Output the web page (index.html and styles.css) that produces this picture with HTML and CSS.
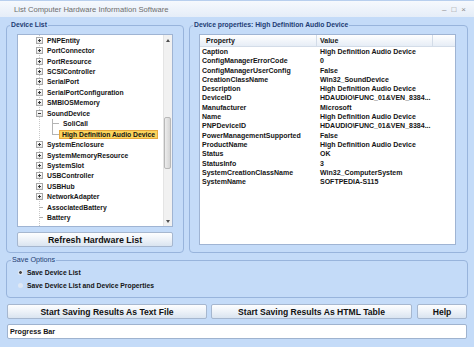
FILE: index.html
```html
<!DOCTYPE html>
<html>
<head>
    <title>List Computer Hardware Information Software</title>
    <meta charset="UTF-8">
    <meta name="viewport" content="width=device-width, initial-scale=1.0">
    <link rel="stylesheet" href="styles.css">
</head>
<body>
    <div class="window">
        <div class="titlebar">
            <span class="title">List Computer Hardware Information Software</span>
            <div class="controls"><span>&ndash;</span><span>&#9633;</span><span>&times;</span></div>
        </div>
        <div class="content">
            <div class="top">
                <fieldset class="group devices">
                    <legend>Device List</legend>
                    <div class="tree">
                        <ul class="nodes">
                            <li><span class="exp"></span>PNPEntity</li>
                            <li><span class="exp"></span>PortConnector</li>
                            <li><span class="exp"></span>PortResource</li>
                            <li><span class="exp"></span>SCSIController</li>
                            <li><span class="exp"></span>SerialPort</li>
                            <li><span class="exp"></span>SerialPortConfiguration</li>
                            <li><span class="exp"></span>SMBIOSMemory</li>
                            <li><span class="exp open"></span>SoundDevice</li>
                            <li class="child"><span class="conn"></span><span class="label">SoliCall</span></li>
                            <li class="child"><span class="conn last"></span><span class="label selected">High Definition Audio Device</span></li>
                            <li><span class="exp"></span>SystemEnclosure</li>
                            <li><span class="exp"></span>SystemMemoryResource</li>
                            <li><span class="exp"></span>SystemSlot</li>
                            <li><span class="exp"></span>USBController</li>
                            <li><span class="exp"></span>USBHub</li>
                            <li><span class="exp"></span>NetworkAdapter</li>
                            <li><span class="leaf"></span>AssociatedBattery</li>
                            <li><span class="leaf"></span>Battery</li>
                        </ul>
                        <div class="scroll">
                            <span class="arrow"></span>
                            <div class="track"><div class="thumb"></div></div>
                            <span class="arrow down"></span>
                        </div>
                    </div>
                    <button class="btn refresh">Refresh Hardware List</button>
                </fieldset>
                <fieldset class="group props">
                    <legend>Device properties: High Definition Audio Device</legend>
                    <div class="listview">
                        <div class="lv-head">
                            <span class="h-prop">Property</span>
                            <span class="h-val">Value</span>
                            <span class="h-rest"></span>
                        </div>
                        <table class="rows">
                            <tr><td class="k">Caption</td><td>High Definition Audio Device</td></tr>
                            <tr><td class="k">ConfigManagerErrorCode</td><td>0</td></tr>
                            <tr><td class="k">ConfigManagerUserConfig</td><td>False</td></tr>
                            <tr><td class="k">CreationClassName</td><td>Win32_SoundDevice</td></tr>
                            <tr><td class="k">Description</td><td>High Definition Audio Device</td></tr>
                            <tr><td class="k">DeviceID</td><td>HDAUDIO\FUNC_01&amp;VEN_8384...</td></tr>
                            <tr><td class="k">Manufacturer</td><td>Microsoft</td></tr>
                            <tr><td class="k">Name</td><td>High Definition Audio Device</td></tr>
                            <tr><td class="k">PNPDeviceID</td><td>HDAUDIO\FUNC_01&amp;VEN_8384...</td></tr>
                            <tr><td class="k">PowerManagementSupported</td><td>False</td></tr>
                            <tr><td class="k">ProductName</td><td>High Definition Audio Device</td></tr>
                            <tr><td class="k">Status</td><td>OK</td></tr>
                            <tr><td class="k">StatusInfo</td><td>3</td></tr>
                            <tr><td class="k">SystemCreationClassName</td><td>Win32_ComputerSystem</td></tr>
                            <tr><td class="k">SystemName</td><td>SOFTPEDIA-S115</td></tr>
                        </table>
                    </div>
                </fieldset>
            </div>
            <fieldset class="group save">
                <legend>Save Options</legend>
                <label class="radio"><span class="dot checked"></span>Save Device List</label>
                <label class="radio"><span class="dot"></span>Save Device List and Device Properties</label>
            </fieldset>
            <div class="actions">
                <button class="btn b-text">Start Saving Results As Text File</button>
                <button class="btn b-html">Start Saving Results As HTML Table</button>
                <button class="btn b-help">Help</button>
            </div>
            <div class="progress">Progress Bar</div>
        </div>
    </div>
</body>
</html>
```

FILE: styles.css
```css
* {
    box-sizing: border-box;
}
body {
    margin: 0;
    font-family: "Liberation Sans", Arial, sans-serif;
    background-color: #c4dbf8;
    color: #151515;
}
.window {
    width: 474px;
    height: 347px;
    overflow: hidden;
}
.titlebar {
    height: 17px;
    display: flex;
    align-items: center;
    justify-content: space-between;
    padding: 0 8px 0 14px;
    background: linear-gradient(#f6f9fd, #e5edf8);
    border-top: 1px solid #b8cfee;
}
.title {
    font-size: 7.6px;
    color: #6d6d6d;
}
.controls {
    display: flex;
    gap: 5px;
    font-size: 8px;
    color: #8c8c8c;
}
.content {
    padding: 3px 6px 0;
}
.top {
    display: flex;
    gap: 5px;
}
.group {
    margin: 0;
    min-width: 0;
    border: 1px solid #98b4dc;
    border-radius: 4px;
}
.group legend {
    padding: 0 1px;
    font-size: 6.8px;
    line-height: 10px;
    font-weight: bold;
    color: #1d3c74;
}
.devices {
    width: 178px;
    padding: 4px 10px 5px;
}
.devices legend {
    margin-left: -7px;
}
.tree {
    display: flex;
    height: 193px;
    background: #fff;
    border: 1px solid #9fb4d3;
}
.nodes {
    flex: 1;
    margin: 0;
    padding: 0;
    list-style: none;
    overflow: hidden;
    font-size: 6.8px;
    font-weight: bold;
    background: repeating-linear-gradient(#c8c8c8 0 1px, transparent 1px 2px) 21px 0 / 1px 100% no-repeat;
}
.nodes li {
    height: 10.45px;
    display: flex;
    align-items: center;
    padding-left: 18px;
    white-space: nowrap;
}
.exp {
    position: relative;
    flex: none;
    width: 7px;
    height: 7px;
    margin-right: 4px;
    border: 1px solid #a8a8a8;
    background: linear-gradient(#fff, #e4e4e4);
}
.exp::before {
    content: "";
    position: absolute;
    left: 1px;
    top: 2px;
    width: 3px;
    height: 1px;
    background: #3a3a3a;
}
.exp::after {
    content: "";
    position: absolute;
    left: 2px;
    top: 1px;
    width: 1px;
    height: 3px;
    background: #3a3a3a;
}
.exp.open::after {
    display: none;
}
.leaf {
    flex: none;
    width: 7px;
    height: 100%;
    margin-right: 4px;
    background: linear-gradient(#b0b0b0, #b0b0b0) right center / 4px 1px no-repeat;
}
.nodes li.child {
    padding-left: 34px;
}
.conn {
    flex: none;
    width: 7px;
    height: 100%;
    background:
        linear-gradient(#b4b4b4, #b4b4b4) left top / 1px 100% no-repeat,
        linear-gradient(#b4b4b4, #b4b4b4) left center / 100% 1px no-repeat;
}
.conn.last {
    background-size: 1px 50%, 100% 1px;
}
.label {
    padding: 0 3px;
    line-height: 7px;
    border: 1px solid transparent;
}
.label.selected {
    padding: 0 2px;
    background: #fbd45c;
    border-color: #e8a83c;
}
.scroll {
    flex: none;
    width: 9px;
    display: flex;
    flex-direction: column;
    background: #f1f1f1;
    border-left: 1px solid #e4e4e4;
}
.arrow {
    height: 10px;
    display: flex;
    align-items: center;
    justify-content: center;
}
.arrow::before {
    content: "";
    border-left: 2.5px solid transparent;
    border-right: 2.5px solid transparent;
    border-bottom: 3px solid #505050;
}
.arrow.down::before {
    border-bottom: 0;
    border-top: 3px solid #505050;
}
.track {
    flex: 1;
}
.thumb {
    margin: 72px 1px 0 0;
    height: 52px;
    background: linear-gradient(90deg, #ececec, #d5d5d5);
    border: 1px solid #b8b8b8;
    border-radius: 2px;
}
.btn {
    height: 15px;
    padding: 0;
    font-family: "Liberation Sans", Arial, sans-serif;
    font-size: 8.6px;
    font-weight: bold;
    color: #111;
    border: 1px solid #a6b7cf;
    border-radius: 2px;
    background: linear-gradient(#fdfeff, #edf2f8 50%, #dae4f0);
}
.refresh {
    display: block;
    width: 100%;
    margin-top: 5px;
    font-size: 8.9px;
}
.props {
    width: 279px;
    padding: 4px 11px 7px 9px;
}
.props legend {
    margin-left: -6px;
}
.listview {
    height: 211px;
    background: #fff;
    border: 1px solid #9fb4d3;
    font-size: 7px;
    font-weight: bold;
}
.lv-head {
    display: flex;
    height: 12px;
    line-height: 11px;
    border-bottom: 1px solid #d3dce8;
    background: linear-gradient(#ffffff, #e6edf6);
}
.h-prop {
    width: 117px;
    padding-left: 6px;
    border-right: 1px solid #d3dce8;
}
.h-val {
    width: 116px;
    padding-left: 3px;
    border-right: 1px solid #d3dce8;
}
.h-rest {
    flex: 1;
}
.rows {
    border-collapse: collapse;
}
.rows td {
    padding: 0 0 0 3px;
    height: 9.29px;
    line-height: 9.29px;
    white-space: nowrap;
}
.rows td.k {
    width: 117px;
    padding-left: 2px;
}
.save {
    margin-top: 2px;
    padding: 1px 10px 5px 11px;
}
.save legend {
    margin-left: -7px;
    font-weight: normal;
    font-size: 7.2px;
}
.radio {
    display: flex;
    align-items: center;
    height: 13px;
    font-size: 6.8px;
    font-weight: bold;
}
.dot {
    width: 5px;
    height: 5px;
    margin-right: 4px;
    border-radius: 50%;
    background: #dfe8f4;
}
.dot.checked {
    background: radial-gradient(#4a4a4a 30%, #c9d3df 45%, #eef2f7 70%);
}
.actions {
    display: flex;
    gap: 4px;
    margin: 6px 1px 0;
}
.b-text {
    width: 200px;
}
.b-html {
    width: 201px;
    margin-right: 1px;
}
.b-help {
    width: 50px;
}
.progress {
    height: 15px;
    margin: 5px 1px 0;
    padding-left: 2px;
    line-height: 13px;
    font-size: 7.2px;
    font-weight: bold;
    background: #fff;
    border: 1px solid #9fb3cf;
    border-radius: 2px;
}
```
